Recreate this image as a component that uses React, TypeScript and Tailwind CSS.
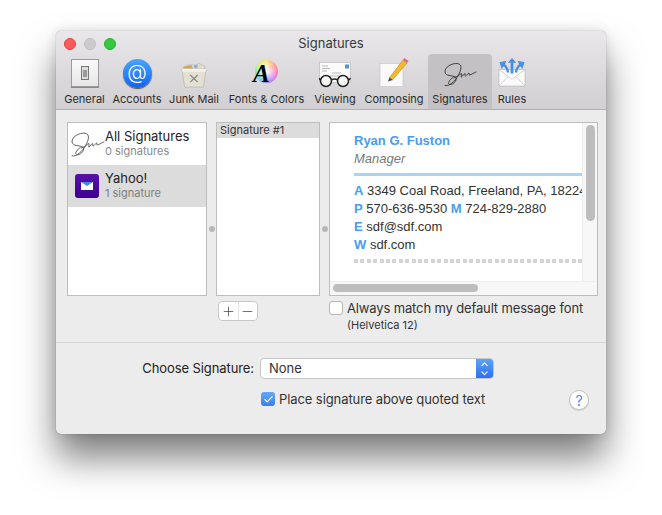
import React from "react";
import { Check, ChevronDown, ChevronUp, Minus, Plus } from "lucide-react";

const ui = "font-['Inter','Liberation_Sans',sans-serif]";

function SigStroke({ className, stroke = "#333" }: { className: string; stroke?: string }) {
  return (
    <svg viewBox="0 0 34 26" className={className} fill="none" stroke={stroke} strokeWidth="0.9" strokeLinecap="round">
      <path d="M2 23.5C6 25 12 19 15 14C18 8.500 20 2.500 14.500 1.500C9 1 1.500 5 2 10C2.500 14.500 9 13 12.500 15C15 16.500 11 23 7 22.500C4 22 6 18 10 15.500" />
      <path d="M11 16C14 15 17 12 18.500 11.500C19 12.500 17.500 15.500 18.500 15C20 14 21 11.500 22 11.500C22.500 12 21.500 14 22.500 14C24 13.500 25 11 26 11C26.500 11.500 25.500 13 26.500 13C28.500 12.500 30.500 11 33 10" />
    </svg>
  );
}

function ToolItem({ label, width, active, children }: { label: string; width: string; active?: boolean; children: React.ReactNode }) {
  return (
    <div className={`flex h-full flex-col items-center shrink-0 rounded-t-[4px] ${width} ${active ? "bg-[#c3c1c3]" : ""}`}>
      <div className="flex h-[34px] w-full items-end justify-center">{children}</div>
      <span className="mt-[4px] whitespace-nowrap text-[11px] leading-[14px] tracking-[-0.01px] text-[#2c2c2c]">{label}</span>
    </div>
  );
}

function AddressLine({ children }: { children: React.ReactNode }) {
  return <div className="h-[18px] whitespace-nowrap text-[13px] leading-[18px] text-[#333]">{children}</div>;
}

function Key({ children }: { children: React.ReactNode }) {
  return <b className="text-[#4a9cf0]">{children}</b>;
}

export default function App() {
  return (
    <div className={`h-[515px] w-[662px] overflow-hidden bg-white pl-[56px] pt-[31px] ${ui}`}>
      <div className="flex h-[403px] w-[550px] flex-col overflow-hidden rounded-[5px] bg-[#ececec] shadow-[0_0_1px_rgba(0,0,0,0.45),0_0_12px_rgba(0,0,0,0.12),0_24px_36px_rgba(0,0,0,0.5)]">
        {/* title and toolbar */}
        <div className="h-[79px] shrink-0 border-b border-[#b2b2b2] bg-gradient-to-b from-[#e9e7e9] to-[#d1cfd1]">
          <div className="grid h-[23px] grid-cols-[1fr_auto_1fr] items-center">
            <div className="flex gap-[8px] pl-[8px] pt-[1px]">
              <span className="h-[12px] w-[12px] rounded-full border border-[#e0443e] bg-[#fc5b57]" />
              <span className="h-[12px] w-[12px] rounded-full border border-[#c0c0c0] bg-[#cdcbcd]" />
              <span className="h-[12px] w-[12px] rounded-full border border-[#2dac2f] bg-[#35c93f]" />
            </div>
            <div className="text-[13px] leading-[24px] text-[#3a3a3a]">Signatures</div>
            <div />
          </div>
          <div className="flex h-[55px] pl-[4px]">
            <ToolItem label="General" width="w-[49px]">
              <div className="mb-[1px] flex h-[28px] w-[28px] items-center justify-center border border-[#9a9a9a] bg-gradient-to-b from-[#fafafa] to-[#e6e6e6] shadow-[0_1px_0_#888]">
                <div className="flex h-[14px] w-[8px] items-center justify-center border border-[#777] bg-[#ddd]">
                  <div className="h-[7px] w-[4px] bg-[#999]" />
                </div>
              </div>
            </ToolItem>
            <ToolItem label="Accounts" width="w-[56px]">
              <div className="flex h-[29px] w-[29px] items-center justify-center rounded-full bg-gradient-to-b from-[#4aa5fb] to-[#1560f0] pb-[3px] text-[20px] font-light leading-none text-white shadow-[0_1px_1px_#555]">
                @
              </div>
            </ToolItem>
            <ToolItem label="Junk Mail" width="w-[58px]">
              <svg viewBox="0 0 30 30" preserveAspectRatio="none" className="h-[27px] w-[28px]">
                <path d="M3 7L10 3.500L17 5L20 2.500L27 6L26 10H4Z" fill="#dfdcd0" stroke="#aaa" strokeWidth=".5" />
                <path d="M4 6.500L12 4.500L14 8H4Z" fill="#d8a14a" />
                <circle cx="17" cy="6" r="2" fill="#7fb2dc" />
                <path d="M2 9H28L25 29H5Z" fill="#e4e1d4" stroke="#b5b1a5" strokeWidth=".7" />
                <path d="M2 9H28L27.500 12H2.500Z" fill="#f3f1e8" />
                <path d="M11 15.500L19 23.500M19 15.500L11 23.500" stroke="#8b8a7d" strokeWidth="1.400" />
              </svg>
            </ToolItem>
            <ToolItem label="Fonts & Colors" width="w-[87px]">
              <div className="relative mb-[1px] h-[27px] w-[29px]">
                <div className="h-[23px] w-[23px] translate-x-[3px] rounded-full bg-[radial-gradient(circle,rgba(255,255,255,0.9)_10%,transparent_75%),conic-gradient(#ffe36b,#ff9a7a,#ff6fb0,#c970f0,#8080f5,#5fd0f0,#70f0a0,#d0f06a,#ffe36b)]" />
                <span className="absolute left-[1px] top-[-1px] font-['Liberation_Serif',serif] text-[25px] font-bold italic leading-[30px] text-black">A</span>
              </div>
            </ToolItem>
            <ToolItem label="Viewing" width="w-[50px]">
              <svg viewBox="0 0 32 26" className="h-[26px] w-[32px]">
                <rect x=".5" y=".5" width="31" height="20" fill="#fbfbfb" stroke="#bbb" strokeWidth=".7" />
                <path d="M3 4H9M3 6.500H11M3 9H8M13 11H22M11 14H25" stroke="#aaa" strokeWidth=".8" />
                <rect x="26" y="2.500" width="4" height="4" fill="#5b8fd0" />
                <circle cx="7" cy="19" r="5.500" fill="#f5f5f5" stroke="#222" strokeWidth="1.500" />
                <circle cx="24" cy="19" r="5.500" fill="#f5f5f5" stroke="#222" strokeWidth="1.500" />
                <path d="M12.500 18Q15.500 16 18.500 18M1 18L0 16M30 18L31.500 16" stroke="#222" strokeWidth="1.300" fill="none" />
              </svg>
            </ToolItem>
            <ToolItem label="Composing" width="w-[68px]">
              <svg viewBox="0 0 30 30" className="mb-[1px] h-[30px] w-[30px]">
                <rect x="1" y="6.500" width="23" height="23" fill="#fafafa" stroke="#c4c4c4" strokeWidth=".6" />
                <path d="M10.500 20.500L24 3L28 6L13.500 23Z" fill="#f2bb2e" stroke="#b07e15" strokeWidth=".5" />
                <path d="M10.500 20.500L9 24.500L13.500 23Z" fill="#444" />
                <path d="M24 3L25.500 1L29.500 4L28 6Z" fill="#e46a80" />
              </svg>
            </ToolItem>
            <ToolItem label="Signatures" width="w-[64px]" active>
              <SigStroke className="h-[26px] w-[34px]" />
            </ToolItem>
            <ToolItem label="Rules" width="w-[40px]">
              <svg viewBox="0 0 30 31" className="mb-[1px] h-[30px] w-[28px]" preserveAspectRatio="none">
                <path d="M1 13H29V30H1Z" fill="#fafafa" stroke="#b5b5b5" strokeWidth=".7" />
                <path d="M1 13L15 23L29 13M1 30L11 20M29 30L19 20" fill="none" stroke="#c4c4c4" strokeWidth=".7" />
                <path d="M15 1L10.500 6H13.500V17H16.500V6H19.500Z" fill="#4a90e2" />
                <path d="M1.500 5.500L9 4L7.500 7.500C10 9.500 11.500 12 12 16H9.500C9 13 7.800 10.800 6 9.500L4 12.500Z" fill="#4a90e2" />
                <path d="M28.500 5.500L21 4L22.500 7.500C20 9.500 18.500 12 18 16H20.500C21 13 22.200 10.800 24 9.500L26 12.500Z" fill="#4a90e2" />
              </svg>
            </ToolItem>
          </div>
        </div>

        {/* lists and preview */}
        <div className="flex h-[186px] shrink-0 pl-[11px] pt-[12px]">
          <div className="w-[140px] border border-[#bdbdbd] bg-white">
            <div className="flex h-[42px]">
              <SigStroke className="ml-[2px] mt-[8px] h-[28px] w-[35px] shrink-0" stroke="#555" />
              <div className="pt-[5px]">
                <div className="text-[13px] leading-[16px] text-[#222]">All Signatures</div>
                <div className="text-[11px] leading-[14px] text-[#8a8a8a]">0 signatures</div>
              </div>
            </div>
            <div className="flex h-[42px] bg-[#dcdcdc]">
              <div className="ml-[7px] mr-[6px] mt-[9px] flex h-[24px] w-[24px] items-center justify-center rounded-[3px] bg-gradient-to-b from-[#5a10a8] to-[#3c0090]">
                <svg viewBox="0 0 12 8" className="h-[8px] w-[12px]">
                  <rect width="12" height="8" fill="#fff" />
                  <path d="M0 0H12L6 4Z" fill="#3d8bf0" />
                </svg>
              </div>
              <div className="pt-[5px]">
                <div className="text-[13px] leading-[16px] text-[#222]">Yahoo!</div>
                <div className="text-[11px] leading-[14px] text-[#7e7e7e]">1 signature</div>
              </div>
            </div>
          </div>
          <div className="flex w-[9px] justify-center pt-[104px]">
            <span className="h-[6px] w-[6px] rounded-full bg-[#b8b8b8]" />
          </div>
          <div className="w-[104px] border border-[#bdbdbd] bg-white">
            <div className="h-[15px] bg-[#dcdcdc] pl-[3px] text-[11px] leading-[15px] text-[#333]">Signature #1</div>
          </div>
          <div className="flex w-[9px] justify-center pt-[104px]">
            <span className="h-[6px] w-[6px] rounded-full bg-[#b8b8b8]" />
          </div>
          <div className="flex w-[269px] flex-col border border-[#bdbdbd] bg-[#f7f7f7]">
            <div className="flex h-[158px]">
              <div className="w-[252px] overflow-hidden bg-white pl-[24px] pt-[9px] font-['Liberation_Sans',sans-serif]">
                <div className="h-[18px] whitespace-nowrap text-[13px] font-bold leading-[18px] text-[#4a9cf0]">Ryan G. Fuston</div>
                <div className="h-[18px] text-[13px] italic leading-[18px] text-[#7a7a7a]">Manager</div>
                <div className="mb-[6px] mt-[5px] h-[3px] bg-[#a6d5fb]" />
                <AddressLine><Key>A</Key> 3349 Coal Road, Freeland, PA, 18224</AddressLine>
                <AddressLine><Key>P</Key> 570-636-9530 <Key>M</Key> 724-829-2880</AddressLine>
                <AddressLine><Key>E</Key> sdf@sdf.com</AddressLine>
                <AddressLine><Key>W</Key> sdf.com</AddressLine>
                <div className="mt-[5px] h-[4px] bg-[repeating-linear-gradient(90deg,#d4d4d4_0,#d4d4d4_4px,transparent_4px,transparent_6.400px)]" />
              </div>
              <div className="flex-1 border-l border-[#eee] pl-[3px] pt-[2px]">
                <div className="h-[96px] w-[9px] rounded-full bg-[#bdbdbd]" />
              </div>
            </div>
            <div className="flex-1 border-t border-[#eee] pl-[3px] pt-[2px]">
              <div className="h-[8px] w-[145px] rounded-full bg-[#bdbdbd]" />
            </div>
          </div>
        </div>

        {/* list buttons and font checkbox */}
        <div className="flex h-[47px] shrink-0 border-b border-[#d6d6d6] pl-[163px] pt-[5px]">
          <div className="-ml-[1px] flex h-[20px] w-[40px] rounded-[4px] border border-[#c8c8c8] bg-white text-[#333]">
            <div className="flex flex-1 items-center justify-center border-r border-[#e2e2e2]"><Plus size={15} strokeWidth={1.1} /></div>
            <div className="flex flex-1 items-center justify-center"><Minus size={15} strokeWidth={1.1} /></div>
          </div>
          <div className="ml-[71px]">
            <div className="flex items-center gap-[4px]">
              <span className="h-[14px] w-[14px] rounded-[3px] border border-[#b5b5b5] bg-white" />
              <span className="whitespace-nowrap text-[13px] leading-[14px] tracking-[-0.14px] text-[#333]">Always match my default message font</span>
            </div>
            <div className="ml-[18px] mt-[4px] text-[11px] leading-[13px] text-[#333]">(Helvetica 12)</div>
          </div>
        </div>

        {/* choose signature */}
        <div className="mt-[15px] flex h-[21px] items-center">
          <div className="w-[198px] text-right text-[13px] tracking-[-0.09px] text-[#222]">Choose Signature:</div>
          <div className="ml-[6px] flex h-[21px] w-[234px] overflow-hidden rounded-[4px] border border-[#c8c8c8] bg-white">
            <div className="flex-1 pl-[8px] text-[13px] leading-[19px] text-[#333]">None</div>
            <div className="flex w-[17px] flex-col items-center justify-center bg-gradient-to-b from-[#5da3f8] to-[#2e6ff2] text-white">
              <ChevronUp size={11} strokeWidth={2.500} className="-mb-[1px]" />
              <ChevronDown size={11} strokeWidth={2.500} className="-mt-[1px]" />
            </div>
          </div>
        </div>
        <div className="mt-[11px] flex items-start">
          <span className="ml-[205px] mt-[2px] flex h-[14px] w-[14px] items-center justify-center rounded-[3px] bg-gradient-to-b from-[#65a8f8] to-[#3a7df0] text-white">
            <Check size={11} strokeWidth={2.500} />
          </span>
          <span className="ml-[4px] whitespace-nowrap text-[13px] leading-[18px] tracking-[-0.09px] text-[#333]">Place signature above quoted text</span>
          <span className="ml-auto mr-[17px] flex h-[20px] w-[20px] items-center justify-center rounded-full border border-[#c4c4c4] bg-white text-[14px] text-[#4a8cf0] shadow-[0_1px_1px_rgba(0,0,0,0.15)]">?</span>
        </div>
      </div>
    </div>
  );
}
